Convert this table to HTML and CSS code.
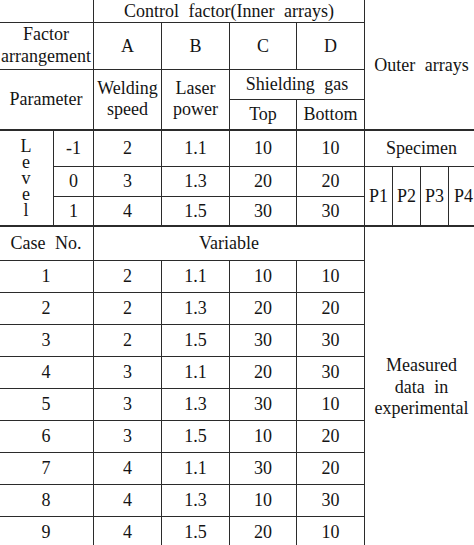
FILE: index.html
```html
<!DOCTYPE html>
<html>
<head>
<meta charset="utf-8">
<link rel="stylesheet" href="styles.css">
</head>
<body>
<table class="grid">
  <colgroup>
    <col class="c-lvl"><col class="c-val">
    <col class="c-a"><col class="c-b"><col class="c-c"><col class="c-d">
    <col class="c-p"><col class="c-p"><col class="c-p"><col class="c-p4">
  </colgroup>
  <tr class="r1">
    <td colspan="2" class="notop"></td>
    <td colspan="4" class="notop">Control factor(Inner arrays)</td>
    <td colspan="4" rowspan="4" class="notop">Outer arrays</td>
  </tr>
  <tr class="r2">
    <td colspan="2" class="two">Factor<br>arrangement</td>
    <td>A</td><td>B</td><td>C</td><td>D</td>
  </tr>
  <tr class="r3">
    <td colspan="2" rowspan="2">Parameter</td>
    <td rowspan="2" class="two">Welding<br>speed</td>
    <td rowspan="2" class="two">Laser<br>power</td>
    <td colspan="2">Shielding gas</td>
  </tr>
  <tr class="r4">
    <td>Top</td><td>Bottom</td>
  </tr>
  <tr class="r5 thick">
    <td rowspan="3" class="level">L<br>e<br>v<br>e<br>l</td>
    <td>-1</td><td>2</td><td>1.1</td><td>10</td><td>10</td>
    <td colspan="4">Specimen</td>
  </tr>
  <tr class="r6">
    <td>0</td><td>3</td><td>1.3</td><td>20</td><td>20</td>
    <td rowspan="2">P1</td><td rowspan="2">P2</td><td rowspan="2">P3</td><td rowspan="2">P4</td>
  </tr>
  <tr class="r7">
    <td>1</td><td>4</td><td>1.5</td><td>30</td><td>30</td>
  </tr>
  <tr class="r8 thick">
    <td colspan="2">Case No.</td>
    <td colspan="4">Variable</td>
    <td colspan="4" rowspan="10" class="two measured">Measured<br>data in<br>experimental</td>
  </tr>
  <tr class="rd"><td colspan="2">1</td><td>2</td><td>1.1</td><td>10</td><td>10</td></tr>
  <tr class="rd"><td colspan="2">2</td><td>2</td><td>1.3</td><td>20</td><td>20</td></tr>
  <tr class="rd"><td colspan="2">3</td><td>2</td><td>1.5</td><td>30</td><td>30</td></tr>
  <tr class="rd"><td colspan="2">4</td><td>3</td><td>1.1</td><td>20</td><td>30</td></tr>
  <tr class="rd"><td colspan="2">5</td><td>3</td><td>1.3</td><td>30</td><td>10</td></tr>
  <tr class="rd"><td colspan="2">6</td><td>3</td><td>1.5</td><td>10</td><td>20</td></tr>
  <tr class="rd"><td colspan="2">7</td><td>4</td><td>1.1</td><td>30</td><td>20</td></tr>
  <tr class="rd"><td colspan="2">8</td><td>4</td><td>1.3</td><td>10</td><td>30</td></tr>
  <tr class="rd"><td colspan="2">9</td><td>4</td><td>1.5</td><td>20</td><td>10</td></tr>
</table>
</body>
</html>
```
FILE: styles.css
```css
html, body {
  margin: 0;
  padding: 0;
  background: #ffffff;
  overflow: hidden;
}
body {
  font-family: "Liberation Serif", "Times New Roman", serif;
  font-size: 18px;
  color: #141414;
}
.grid {
  border-collapse: collapse;
  table-layout: fixed;
  width: 480px;
  margin-left: -2px;
  word-spacing: 5px;
}
.c-lvl { width: 55px; }
.c-val { width: 40px; }
.c-a { width: 68px; }
.c-b { width: 68px; }
.c-c { width: 67px; }
.c-d { width: 68px; }
.c-p { width: 28px; }
.c-p4 { width: 30px; }
.grid td {
  border: 1px solid #2b2b2b;
  padding: 0;
  text-align: center;
  vertical-align: middle;
  line-height: 20px;
  white-space: nowrap;
  overflow: visible;
}
.grid td.notop { border-top: none; }
.grid td.two { line-height: 21.5px; }
.grid td.level { line-height: 16px; }
.grid tr.thick td { border-top: 2px solid #2b2b2b; }
.r1 { height: 22px; }
.r2 { height: 47px; }
.r3 { height: 30px; }
.r4 { height: 31px; }
.r5 { height: 36px; }
.r6 { height: 30px; }
.r7 { height: 30px; }
.r8 { height: 34px; }
.rd { height: 32px; }
```
